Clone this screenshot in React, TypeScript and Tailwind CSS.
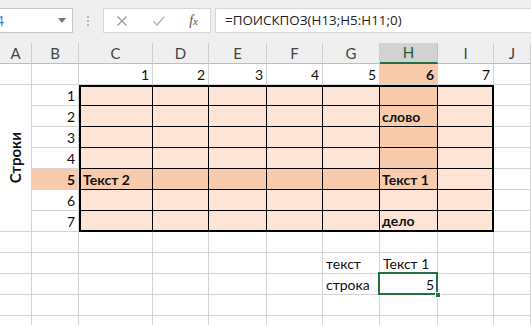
import React from 'react';

const cols = ['A', 'B', 'C', 'D', 'E', 'F', 'G', 'H', 'I', 'J'];

const light = 'bg-[#fce4d6]';
const dark = 'bg-[#f8cbad]';

// table body text: [row]-[col] for C..I
const tableText: Record<string, string> = {
  '1-5': 'слово',
  '4-0': 'Текст 2',
  '4-5': 'Текст 1',
  '6-5': 'дело',
};

function isDark(r: number, c: number) {
  return (r === 4 && c <= 5) || (c === 5 && r <= 4);
}

function Cell({ children, className = '' }: { children?: React.ReactNode; className?: string }) {
  return (
    <div
      className={`h-[21px] border-r border-b border-[#d4d4d4] flex items-end px-[3px] text-[14px] leading-[19px] text-[#111] overflow-hidden whitespace-nowrap ${className}`}
    >
      {children}
    </div>
  );
}

function FormulaBar() {
  return (
    <div className="h-[43px] bg-[#efefef] flex items-start pt-[8px]">
      <div className="w-[73px] h-[25px] bg-white border border-l-0 border-[#c6c6c6] flex items-center justify-between pr-[6px]">
        <span className="-ml-[4px] text-[14px] text-[#3b7dd8] font-['Open_Sans',sans-serif]">4</span>
        <svg width="8" height="5" viewBox="0 0 8 5">
          <path d="M0 0 L8 0 L4 5 Z" fill="#777" />
        </svg>
      </div>
      <div className="w-[30px] h-[25px] flex flex-col items-center justify-center gap-[2px]">
        <span className="w-[2px] h-[2px] bg-[#b8b8b8]" />
        <span className="w-[2px] h-[2px] bg-[#b8b8b8]" />
        <span className="w-[2px] h-[2px] bg-[#b8b8b8]" />
      </div>
      <div className="w-[108px] h-[25px] bg-white border border-[#d6d6d6] flex items-center px-[12px] justify-between">
        <svg width="12" height="12" viewBox="0 0 12 12">
          <path d="M1.5 1.5 L10.5 10.5 M10.5 1.5 L1.5 10.5" stroke="#9a9a9a" strokeWidth="1.3" />
        </svg>
        <svg width="14" height="12" viewBox="0 0 14 12">
          <path d="M1.5 6.5 L5 10 L12.5 1.5" stroke="#b5b5b5" strokeWidth="1.4" fill="none" />
        </svg>
        <span className="italic text-[14px] text-[#555] font-['Liberation_Serif',serif] leading-none">
          f<span className="text-[11px]">x</span>
        </span>
      </div>
      <div className="ml-[4px] flex-1 h-[25px] bg-white border border-r-0 border-[#d6d6d6] flex items-center pl-[9px] text-[13.4px] text-[#222] font-['Open_Sans',sans-serif]">
        =ПОИСКПОЗ(H13;H5:H11;0)
      </div>
    </div>
  );
}

function DataTable() {
  const idx = [0, 1, 2, 3, 4, 5, 6];
  return (
    <div className="col-span-7 row-span-7 border-2 border-black grid grid-cols-[72px_56px_58px_56px_57px_58px_54px] grid-rows-[19px_21px_21px_21px_21px_21px_19px]">
      {idx.map((r) =>
        idx.map((c) => (
          <div
            key={`${r}-${c}`}
            className={`${isDark(r, c) ? dark : light} ${c < 6 ? 'border-r' : ''} ${r < 6 ? 'border-b' : ''} border-black flex items-end px-[2px] text-[14px] leading-[19px] font-bold text-[#111] whitespace-nowrap overflow-hidden`}
          >
            {tableText[`${r}-${c}`] ?? ''}
          </div>
        ))
      )}
    </div>
  );
}

export default function App() {
  return (
    <div className="w-[531px] h-[325px] overflow-hidden bg-white font-['Lato','Liberation_Sans',sans-serif]">
      <FormulaBar />
      <div className="grid grid-cols-[32px_47px_74px_56px_58px_56px_57px_58px_56px_1fr] auto-rows-[21px]">
        {/* column headers */}
        {cols.map((c) => (
          <div
            key={c}
            className={`h-[21px] border-r flex items-center justify-center text-[15px] ${
              c === 'H'
                ? 'bg-[#d2d2d2] border-[#c0c0c0] border-b-2 border-b-[#217346] text-[#1e5e3a]'
                : 'bg-[#efefef] border-[#cfcfcf] border-b border-b-[#bdbdbd] text-[#444]'
            }`}
          >
            {c}
          </div>
        ))}

        {/* numbers row */}
        <Cell />
        <Cell />
        {[1, 2, 3, 4, 5, 6, 7].map((n) => (
          <Cell key={n} className={`justify-end ${n === 6 ? `${dark} font-bold` : ''}`}>
            {n}
          </Cell>
        ))}
        <Cell />

        {/* table rows 1..7 */}
        <div className="row-span-7 border-r border-b border-[#d4d4d4] flex items-center justify-center">
          <span className="[writing-mode:vertical-rl] rotate-180 font-bold text-[15px] text-[#111]">Строки</span>
        </div>
        <Cell className="justify-end">1</Cell>
        <DataTable />
        <Cell />
        {[2, 3, 4, 5, 6, 7].map((n) => (
          <React.Fragment key={n}>
            <Cell className={`justify-end ${n === 5 ? `${dark} font-bold` : ''}`}>{n}</Cell>
            <Cell />
          </React.Fragment>
        ))}

        {/* rows below table */}
        {[0, 1, 2, 3, 4].map((r) =>
          cols.map((c) => {
            if (r === 1 && c === 'G') return <Cell key={`${r}${c}`}>текст</Cell>;
            if (r === 1 && c === 'H') return <Cell key={`${r}${c}`}>Текст 1</Cell>;
            if (r === 2 && c === 'G') return <Cell key={`${r}${c}`}>строка</Cell>;
            if (r === 2 && c === 'H')
              return (
                <Cell key={`${r}${c}`} className="justify-end relative overflow-visible">
                  5
                  <div className="absolute -left-[2px] -top-[2px] -right-[1px] -bottom-[1px] border-2 border-[#217346]" />
                  <div className="absolute -right-[4px] -bottom-[4px] w-[6px] h-[6px] bg-[#217346] border border-white" />
                </Cell>
              );
            return <Cell key={`${r}${c}`} />;
          })
        )}
      </div>
    </div>
  );
}
